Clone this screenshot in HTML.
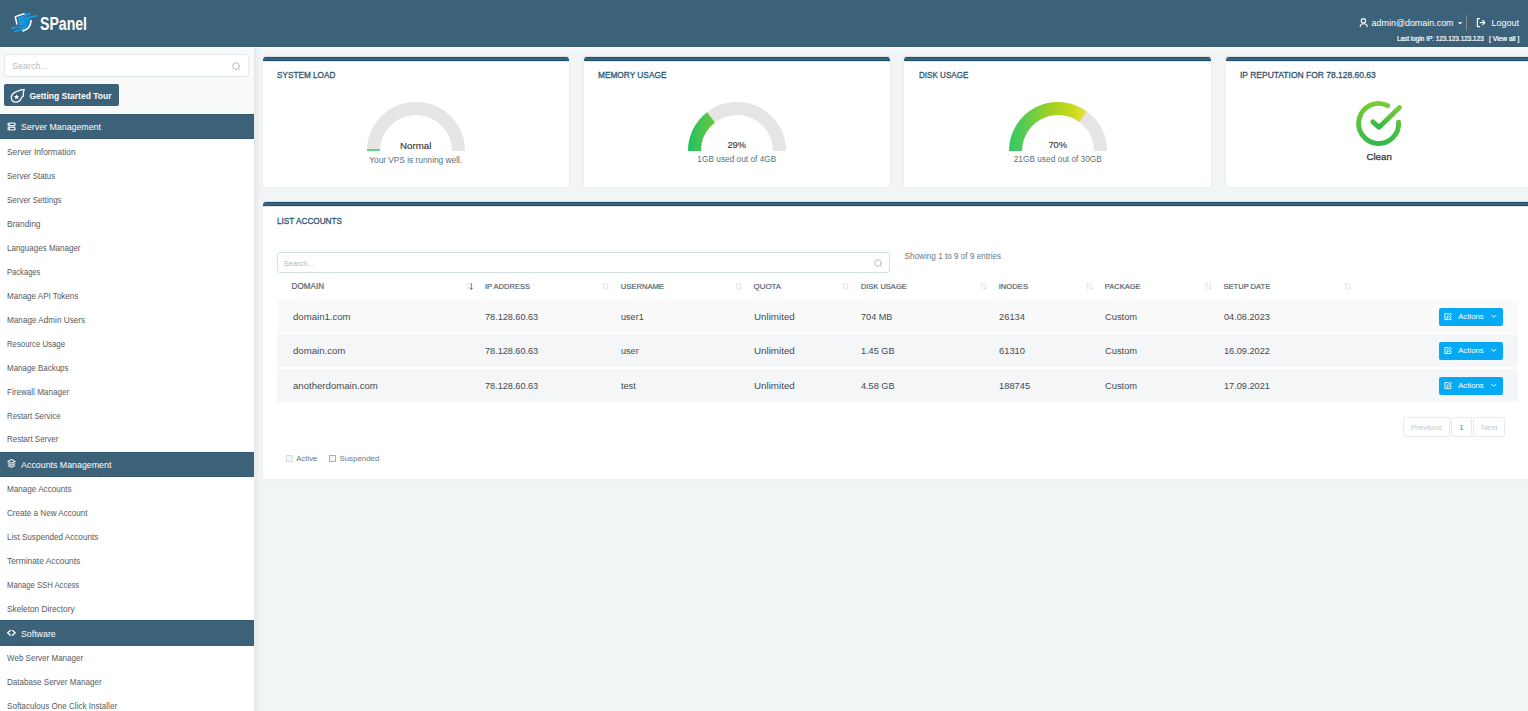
<!DOCTYPE html>
<html><head><meta charset="utf-8"><title>SPanel</title>
<style>
html,body{margin:0;padding:0;}
body{width:1528px;height:711px;overflow:hidden;position:relative;background:#f2f5f6;font-family:'Liberation Sans', sans-serif;}
.t{position:absolute;white-space:nowrap;line-height:1;}
svg{position:absolute;overflow:visible;}
</style></head><body>
<div style="position:absolute;left:0px;top:0px;width:1528px;height:47px;background:#3c627a;"></div>
<div style="position:absolute;left:0px;top:46px;width:1528px;height:1px;background:#385d75;"></div>
<div style="position:absolute;left:0px;top:47px;width:1528px;height:1px;background:#ffffff;"></div>
<div style="position:absolute;left:0px;top:48px;width:254px;height:663px;background:#ffffff;"></div>
<div style="position:absolute;left:0px;top:48px;width:254px;height:66px;background:#f8f9f9;"></div>
<div style="position:absolute;left:254px;top:48px;width:7px;height:663px;background:linear-gradient(90deg,#e6e9eb,#f2f5f6);"></div>
<div style="position:absolute;left:261px;top:48px;width:1267px;height:8px;background:linear-gradient(180deg,#f7f8f9,#f0f3f4);"></div>
<div class="t" style="left:39.60px;top:15.10px;font-size:18.0px;color:#ffffff;font-weight:700;transform:scaleX(0.783);transform-origin:left top;">SPanel</div>
<div class="t" style="left:1371.60px;top:18.70px;font-size:8.94px;color:#ffffff;font-weight:400;">admin@domain.com</div>
<div class="t" style="left:1491.50px;top:18.68px;font-size:8.96px;color:#ffffff;font-weight:400;">Logout</div>
<div class="t" style="left:1397.20px;top:35.59px;font-size:6.6px;color:#ffffff;font-weight:400;transform:scaleX(0.9696969696969698);transform-origin:left top;-webkit-text-stroke:0.2px #ffffff;">Last login IP: 123.123.123.123</div>
<div class="t" style="left:1489.20px;top:35.59px;font-size:6.6px;color:#ffffff;font-weight:400;transform:scaleX(1.0121212121212122);transform-origin:left top;-webkit-text-stroke:0.2px #ffffff;">[ View all ]</div>
<div style="position:absolute;left:4px;top:54px;width:245px;height:23px;box-sizing:border-box;background:#fff;border:1px solid #e3e8ec;border-radius:3px;"></div>
<div class="t" style="left:12.00px;top:61.95px;font-size:9.0px;color:#b8bcc0;font-weight:400;">Search...</div>
<div style="position:absolute;left:4px;top:84px;width:115px;height:22px;background:#3c627a;border-radius:2px;"></div>
<div class="t" style="left:29.40px;top:92.36px;font-size:8.52px;color:#ffffff;font-weight:700;">Getting Started Tour</div>
<div style="position:absolute;left:0px;top:114px;width:254px;height:25px;background:#3c627a;"></div>
<div style="position:absolute;left:0px;top:114px;width:254px;height:1px;background:#345a72;"></div>
<div style="position:absolute;left:0px;top:138px;width:254px;height:1px;background:#365b73;"></div>
<div class="t" style="left:21.00px;top:123.09px;font-size:8.83px;color:#ffffff;font-weight:400;">Server Management</div>
<div class="t" style="left:7.30px;top:148.29px;font-size:8.6px;color:#555b61;font-weight:400;transform:scaleX(0.9709302325581395);transform-origin:left top;">Server Information</div>
<div class="t" style="left:7.30px;top:172.22px;font-size:8.6px;color:#555b61;font-weight:400;transform:scaleX(0.9267441860465117);transform-origin:left top;">Server Status</div>
<div class="t" style="left:7.30px;top:196.15px;font-size:8.6px;color:#555b61;font-weight:400;transform:scaleX(0.9290697674418605);transform-origin:left top;">Server Settings</div>
<div class="t" style="left:7.30px;top:220.08px;font-size:8.6px;color:#555b61;font-weight:400;transform:scaleX(0.9732558139534884);transform-origin:left top;">Branding</div>
<div class="t" style="left:7.30px;top:244.01px;font-size:8.6px;color:#555b61;font-weight:400;transform:scaleX(0.9325581395348838);transform-origin:left top;">Languages Manager</div>
<div class="t" style="left:7.30px;top:267.94px;font-size:8.6px;color:#555b61;font-weight:400;transform:scaleX(0.8848837209302326);transform-origin:left top;">Packages</div>
<div class="t" style="left:7.30px;top:291.87px;font-size:8.6px;color:#555b61;font-weight:400;transform:scaleX(0.9348837209302325);transform-origin:left top;">Manage API Tokens</div>
<div class="t" style="left:7.30px;top:315.80px;font-size:8.6px;color:#555b61;font-weight:400;transform:scaleX(0.9500000000000001);transform-origin:left top;">Manage Admin Users</div>
<div class="t" style="left:7.30px;top:339.73px;font-size:8.6px;color:#555b61;font-weight:400;transform:scaleX(0.9058139534883721);transform-origin:left top;">Resource Usage</div>
<div class="t" style="left:7.30px;top:363.66px;font-size:8.6px;color:#555b61;font-weight:400;transform:scaleX(0.9255813953488372);transform-origin:left top;">Manage Backups</div>
<div class="t" style="left:7.30px;top:387.59px;font-size:8.6px;color:#555b61;font-weight:400;transform:scaleX(0.9418604651162791);transform-origin:left top;">Firewall Manager</div>
<div class="t" style="left:7.30px;top:411.52px;font-size:8.6px;color:#555b61;font-weight:400;transform:scaleX(0.9104651162790698);transform-origin:left top;">Restart Service</div>
<div class="t" style="left:7.30px;top:435.45px;font-size:8.6px;color:#555b61;font-weight:400;transform:scaleX(0.9255813953488372);transform-origin:left top;">Restart Server</div>
<div style="position:absolute;left:0px;top:451.5px;width:254px;height:25px;background:#3c627a;"></div>
<div style="position:absolute;left:0px;top:452px;width:254px;height:1px;background:#345a72;"></div>
<div style="position:absolute;left:0px;top:476px;width:254px;height:1px;background:#365b73;"></div>
<div class="t" style="left:21.10px;top:460.59px;font-size:8.83px;color:#ffffff;font-weight:400;">Accounts Management</div>
<div class="t" style="left:7.10px;top:484.79px;font-size:8.6px;color:#555b61;font-weight:400;transform:scaleX(0.9453488372093024);transform-origin:left top;">Manage Accounts</div>
<div class="t" style="left:7.10px;top:508.75px;font-size:8.6px;color:#555b61;font-weight:400;transform:scaleX(0.9418604651162791);transform-origin:left top;">Create a New Account</div>
<div class="t" style="left:7.10px;top:532.71px;font-size:8.6px;color:#555b61;font-weight:400;transform:scaleX(0.9453488372093024);transform-origin:left top;">List Suspended Accounts</div>
<div class="t" style="left:7.10px;top:556.67px;font-size:8.6px;color:#555b61;font-weight:400;transform:scaleX(0.9767441860465117);transform-origin:left top;">Terminate Accounts</div>
<div class="t" style="left:7.10px;top:580.63px;font-size:8.6px;color:#555b61;font-weight:400;transform:scaleX(0.894186046511628);transform-origin:left top;">Manage SSH Access</div>
<div class="t" style="left:7.10px;top:604.59px;font-size:8.6px;color:#555b61;font-weight:400;transform:scaleX(0.9616279069767442);transform-origin:left top;">Skeleton Directory</div>
<div style="position:absolute;left:0px;top:620.5px;width:254px;height:25px;background:#3c627a;"></div>
<div style="position:absolute;left:0px;top:620px;width:254px;height:1px;background:#345a72;"></div>
<div style="position:absolute;left:0px;top:644px;width:254px;height:1px;background:#365b73;"></div>
<div class="t" style="left:20.90px;top:629.59px;font-size:8.83px;color:#ffffff;font-weight:400;">Software</div>
<div class="t" style="left:7.30px;top:653.89px;font-size:8.6px;color:#555b61;font-weight:400;transform:scaleX(0.9337209302325581);transform-origin:left top;">Web Server Manager</div>
<div class="t" style="left:7.30px;top:677.79px;font-size:8.6px;color:#555b61;font-weight:400;transform:scaleX(0.9383720930232559);transform-origin:left top;">Database Server Manager</div>
<div class="t" style="left:7.30px;top:701.69px;font-size:8.6px;color:#555b61;font-weight:400;transform:scaleX(0.9406976744186046);transform-origin:left top;">Softaculous One Click Installer</div>
<div style="position:absolute;left:262.5px;top:57px;width:306.5px;height:130px;box-sizing:border-box;background:#fff;border-radius:3px;box-shadow:0 0 3px rgba(0,0,0,0.07);"></div>
<div style="position:absolute;left:262.5px;top:56px;width:306.5px;height:1px;background:#dde0e3;border-radius:3px 3px 0 0;"></div>
<div style="position:absolute;left:262.5px;top:57px;width:306.5px;height:4px;background:linear-gradient(180deg,#1b5270 0,#1b5270 1px,#3d6279 1px,#3d6279 3px,#1b5270 3px);border-radius:3px 3px 0 0;"></div>
<div style="position:absolute;left:262.5px;top:61px;width:306.5px;height:1px;background:#e6e9ec;"></div>
<div class="t" style="left:277.00px;top:70.85px;font-size:9.0px;color:#2d5670;font-weight:400;transform:scaleX(0.911111111111111);transform-origin:left top;-webkit-text-stroke:0.3px #2d5670;">SYSTEM LOAD</div>
<div style="position:absolute;left:583.5px;top:57px;width:306.5px;height:130px;box-sizing:border-box;background:#fff;border-radius:3px;box-shadow:0 0 3px rgba(0,0,0,0.07);"></div>
<div style="position:absolute;left:583.5px;top:56px;width:306.5px;height:1px;background:#dde0e3;border-radius:3px 3px 0 0;"></div>
<div style="position:absolute;left:583.5px;top:57px;width:306.5px;height:4px;background:linear-gradient(180deg,#1b5270 0,#1b5270 1px,#3d6279 1px,#3d6279 3px,#1b5270 3px);border-radius:3px 3px 0 0;"></div>
<div style="position:absolute;left:583.5px;top:61px;width:306.5px;height:1px;background:#e6e9ec;"></div>
<div class="t" style="left:598.00px;top:70.85px;font-size:9.0px;color:#2d5670;font-weight:400;transform:scaleX(0.9222222222222223);transform-origin:left top;-webkit-text-stroke:0.3px #2d5670;">MEMORY USAGE</div>
<div style="position:absolute;left:904px;top:57px;width:306.5px;height:130px;box-sizing:border-box;background:#fff;border-radius:3px;box-shadow:0 0 3px rgba(0,0,0,0.07);"></div>
<div style="position:absolute;left:904px;top:56px;width:306.5px;height:1px;background:#dde0e3;border-radius:3px 3px 0 0;"></div>
<div style="position:absolute;left:904px;top:57px;width:306.5px;height:4px;background:linear-gradient(180deg,#1b5270 0,#1b5270 1px,#3d6279 1px,#3d6279 3px,#1b5270 3px);border-radius:3px 3px 0 0;"></div>
<div style="position:absolute;left:904px;top:61px;width:306.5px;height:1px;background:#e6e9ec;"></div>
<div class="t" style="left:918.50px;top:70.85px;font-size:9.0px;color:#2d5670;font-weight:400;transform:scaleX(0.8966666666666667);transform-origin:left top;-webkit-text-stroke:0.3px #2d5670;">DISK USAGE</div>
<div style="position:absolute;left:1225.5px;top:57px;width:306.5px;height:130px;box-sizing:border-box;background:#fff;border-radius:3px;box-shadow:0 0 3px rgba(0,0,0,0.07);"></div>
<div style="position:absolute;left:1225.5px;top:56px;width:306.5px;height:1px;background:#dde0e3;border-radius:3px 3px 0 0;"></div>
<div style="position:absolute;left:1225.5px;top:57px;width:306.5px;height:4px;background:linear-gradient(180deg,#1b5270 0,#1b5270 1px,#3d6279 1px,#3d6279 3px,#1b5270 3px);border-radius:3px 3px 0 0;"></div>
<div style="position:absolute;left:1225.5px;top:61px;width:306.5px;height:1px;background:#e6e9ec;"></div>
<div class="t" style="left:1240.00px;top:70.85px;font-size:9.0px;color:#2d5670;font-weight:400;transform:scaleX(0.9422222222222223);transform-origin:left top;-webkit-text-stroke:0.3px #2d5670;">IP REPUTATION FOR 78.128.60.63</div>
<div style="position:absolute;left:262.5px;top:202px;width:1275px;height:277px;box-sizing:border-box;background:#fff;border-radius:3px;box-shadow:0 0 3px rgba(0,0,0,0.07);"></div>
<div style="position:absolute;left:262.5px;top:201px;width:1275px;height:1px;background:#dde0e3;border-radius:3px 3px 0 0;"></div>
<div style="position:absolute;left:262.5px;top:202px;width:1275px;height:4px;background:linear-gradient(180deg,#1b5270 0,#1b5270 1px,#3d6279 1px,#3d6279 3px,#1b5270 3px);border-radius:3px 3px 0 0;"></div>
<div style="position:absolute;left:262.5px;top:206px;width:1275px;height:1px;background:#e6e9ec;"></div>
<div class="t" style="left:276.80px;top:216.55px;font-size:9.0px;color:#2d5670;font-weight:400;transform:scaleX(0.911111111111111);transform-origin:left top;-webkit-text-stroke:0.3px #2d5670;">LIST ACCOUNTS</div>
<svg style="left:366.70px;top:101.80px" width="98" height="49" viewBox="0 0 98 49"><defs><linearGradient id="g1" gradientUnits="userSpaceOnUse" x1="0" y1="0" x2="13.00" y2="0"><stop offset="0" stop-color="#3ec66a"/><stop offset="1" stop-color="#3ec66a"/></linearGradient></defs><path d="M6.50 49.00 A42.5 42.5 0 0 1 91.50 49.00" fill="none" stroke="#e5e5e5" stroke-width="13"/><path d="M6.50 49.00 A42.5 42.5 0 0 1 6.50 48.47" fill="none" stroke="url(#g1)" stroke-width="13"/></svg>
<div class="t" style="left:-84.30px;width:1000px;text-align:center;top:140.95px;font-size:9.71px;color:#333333;font-weight:400;-webkit-text-stroke:0.12px #333333;">Normal</div>
<div class="t" style="left:-84.30px;width:1000px;text-align:center;top:155.94px;font-size:8.3px;color:#5b6f80;font-weight:400;">Your VPS is running well.</div>
<svg style="left:687.80px;top:101.80px" width="98" height="49" viewBox="0 0 98 49"><defs><linearGradient id="g2" gradientUnits="userSpaceOnUse" x1="0" y1="0" x2="29.56" y2="0"><stop offset="0" stop-color="#22c163"/><stop offset="1" stop-color="#72c93a"/></linearGradient></defs><path d="M6.50 49.00 A42.5 42.5 0 0 1 91.50 49.00" fill="none" stroke="#e5e5e5" stroke-width="13"/><path d="M6.50 49.00 A42.5 42.5 0 0 1 23.06 15.34" fill="none" stroke="url(#g2)" stroke-width="13"/></svg>
<div class="t" style="left:236.80px;width:1000px;text-align:center;top:139.61px;font-size:9.4px;color:#333333;font-weight:400;-webkit-text-stroke:0.12px #333333;">29%</div>
<div class="t" style="left:236.80px;width:1000px;text-align:center;top:154.54px;font-size:8.3px;color:#5b6f80;font-weight:400;">1GB used out of 4GB</div>
<svg style="left:1008.80px;top:101.80px" width="98" height="49" viewBox="0 0 98 49"><defs><linearGradient id="g3" gradientUnits="userSpaceOnUse" x1="0" y1="0" x2="80.48" y2="0"><stop offset="0" stop-color="#2ec96b"/><stop offset="0.5" stop-color="#9dd023"/><stop offset="0.78" stop-color="#c8d81e"/><stop offset="1" stop-color="#f2e43e"/></linearGradient></defs><path d="M6.50 49.00 A42.5 42.5 0 0 1 91.50 49.00" fill="none" stroke="#e5e5e5" stroke-width="13"/><path d="M6.50 49.00 A42.5 42.5 0 0 1 73.98 14.62" fill="none" stroke="url(#g3)" stroke-width="13"/></svg>
<div class="t" style="left:557.80px;width:1000px;text-align:center;top:139.61px;font-size:9.4px;color:#333333;font-weight:400;-webkit-text-stroke:0.12px #333333;">70%</div>
<div class="t" style="left:557.80px;width:1000px;text-align:center;top:154.54px;font-size:8.3px;color:#5b6f80;font-weight:400;">21GB used out of 30GB</div>
<svg style="left:1350px;top:95px" width="60" height="60" viewBox="1350 95 60 60"><defs><linearGradient id="gc" x1="0" y1="0" x2="0" y2="1"><stop offset="0" stop-color="#7acb34"/><stop offset="1" stop-color="#36b94a"/></linearGradient></defs><g fill="none" stroke="url(#gc)" stroke-width="4.9" stroke-linecap="round" stroke-linejoin="round"><path d="M1387.73 105.68 A20 20 0 1 0 1398.61 122.28"/><path d="M1372.8 121.8 L1379.1 127.3 L1399.5 107.5"/></g></svg>
<div class="t" style="left:879.10px;width:1000px;text-align:center;top:151.94px;font-size:9.72px;color:#333333;font-weight:400;-webkit-text-stroke:0.25px #333333;">Clean</div>
<div style="position:absolute;left:277px;top:252px;width:612.5px;height:20.5px;box-sizing:border-box;border:1px solid #d3e0e5;border-radius:3px;background:#fff;"></div>
<div class="t" style="left:283.40px;top:259.90px;font-size:7.65px;color:#b4b9be;font-weight:400;">Search...</div>
<div class="t" style="left:904.60px;top:253.46px;font-size:8.17px;color:#6b7782;font-weight:400;">Showing 1 to 9 of 9 entries</div>
<div class="t" style="left:291.60px;top:282.87px;font-size:8.15px;color:#58656f;font-weight:400;-webkit-text-stroke:0.2px #58656f;">DOMAIN</div>
<svg style="left:464.2px;top:280px" width="12" height="12" viewBox="464.2 280 12 12"><g fill="none" stroke-width="0.9" stroke-linecap="round" stroke-linejoin="round"><path d="M468.0 283.4 L468.0 289.4 M466.7 284.8 L468.0 283.4 L469.3 284.8" stroke="#dde1e5"/><path d="M471.5 283.4 L471.5 289.4 M470.2 288.0 L471.5 289.4 L472.8 288.0" stroke="#5b6b78"/></g></svg>
<div class="t" style="left:484.90px;top:283.39px;font-size:7.54px;color:#58656f;font-weight:400;-webkit-text-stroke:0.2px #58656f;">IP ADDRESS</div>
<svg style="left:600.2px;top:280px" width="12" height="12" viewBox="600.2 280 12 12"><g fill="none" stroke-width="0.9" stroke-linecap="round" stroke-linejoin="round"><path d="M604.0 283.4 L604.0 289.4 M602.7 284.8 L604.0 283.4 L605.3 284.8" stroke="#dde1e5"/><path d="M607.5 283.4 L607.5 289.4 M606.2 288.0 L607.5 289.4 L608.8 288.0" stroke="#dde1e5"/></g></svg>
<div class="t" style="left:620.80px;top:283.32px;font-size:7.62px;color:#58656f;font-weight:400;-webkit-text-stroke:0.2px #58656f;">USERNAME</div>
<svg style="left:733px;top:280px" width="12" height="12" viewBox="733 280 12 12"><g fill="none" stroke-width="0.9" stroke-linecap="round" stroke-linejoin="round"><path d="M736.8 283.4 L736.8 289.4 M735.5 284.8 L736.8 283.4 L738.0999999999999 284.8" stroke="#dde1e5"/><path d="M740.3 283.4 L740.3 289.4 M739.0 288.0 L740.3 289.4 L741.5999999999999 288.0" stroke="#dde1e5"/></g></svg>
<div class="t" style="left:753.50px;top:283.06px;font-size:7.93px;color:#58656f;font-weight:400;-webkit-text-stroke:0.2px #58656f;">QUOTA</div>
<svg style="left:840.2px;top:280px" width="12" height="12" viewBox="840.2 280 12 12"><g fill="none" stroke-width="0.9" stroke-linecap="round" stroke-linejoin="round"><path d="M844.0 283.4 L844.0 289.4 M842.7 284.8 L844.0 283.4 L845.3 284.8" stroke="#dde1e5"/><path d="M847.5 283.4 L847.5 289.4 M846.2 288.0 L847.5 289.4 L848.8 288.0" stroke="#dde1e5"/></g></svg>
<div class="t" style="left:860.80px;top:283.40px;font-size:7.53px;color:#58656f;font-weight:400;-webkit-text-stroke:0.2px #58656f;">DISK USAGE</div>
<svg style="left:977.8px;top:280px" width="12" height="12" viewBox="977.8 280 12 12"><g fill="none" stroke-width="0.9" stroke-linecap="round" stroke-linejoin="round"><path d="M981.5999999999999 283.4 L981.5999999999999 289.4 M980.3 284.8 L981.5999999999999 283.4 L982.8999999999999 284.8" stroke="#dde1e5"/><path d="M985.0999999999999 283.4 L985.0999999999999 289.4 M983.8 288.0 L985.0999999999999 289.4 L986.3999999999999 288.0" stroke="#dde1e5"/></g></svg>
<div class="t" style="left:998.70px;top:283.28px;font-size:7.67px;color:#58656f;font-weight:400;-webkit-text-stroke:0.2px #58656f;">INODES</div>
<svg style="left:1084.4px;top:280px" width="12" height="12" viewBox="1084.4 280 12 12"><g fill="none" stroke-width="0.9" stroke-linecap="round" stroke-linejoin="round"><path d="M1088.2 283.4 L1088.2 289.4 M1086.9 284.8 L1088.2 283.4 L1089.5 284.8" stroke="#dde1e5"/><path d="M1091.7 283.4 L1091.7 289.4 M1090.4 288.0 L1091.7 289.4 L1093.0 288.0" stroke="#dde1e5"/></g></svg>
<div class="t" style="left:1104.80px;top:283.43px;font-size:7.5px;color:#58656f;font-weight:400;-webkit-text-stroke:0.2px #58656f;">PACKAGE</div>
<svg style="left:1202.6px;top:280px" width="12" height="12" viewBox="1202.6 280 12 12"><g fill="none" stroke-width="0.9" stroke-linecap="round" stroke-linejoin="round"><path d="M1206.3999999999999 283.4 L1206.3999999999999 289.4 M1205.1 284.8 L1206.3999999999999 283.4 L1207.6999999999998 284.8" stroke="#dde1e5"/><path d="M1209.8999999999999 283.4 L1209.8999999999999 289.4 M1208.6 288.0 L1209.8999999999999 289.4 L1211.1999999999998 288.0" stroke="#dde1e5"/></g></svg>
<div class="t" style="left:1223.50px;top:283.38px;font-size:7.55px;color:#58656f;font-weight:400;-webkit-text-stroke:0.2px #58656f;">SETUP DATE</div>
<svg style="left:1341.6px;top:280px" width="12" height="12" viewBox="1341.6 280 12 12"><g fill="none" stroke-width="0.9" stroke-linecap="round" stroke-linejoin="round"><path d="M1345.3999999999999 283.4 L1345.3999999999999 289.4 M1344.1 284.8 L1345.3999999999999 283.4 L1346.6999999999998 284.8" stroke="#dde1e5"/><path d="M1348.8999999999999 283.4 L1348.8999999999999 289.4 M1347.6 288.0 L1348.8999999999999 289.4 L1350.1999999999998 288.0" stroke="#dde1e5"/></g></svg>
<div style="position:absolute;left:277px;top:300px;width:1241px;height:33px;background:#fafafa;"></div>
<div class="t" style="left:293.30px;top:311.96px;font-size:9.7px;color:#444a50;font-weight:400;transform:scaleX(0.9907216494845361);transform-origin:left top;">domain1.com</div>
<div class="t" style="left:485.20px;top:311.96px;font-size:9.7px;color:#444a50;font-weight:400;transform:scaleX(0.9391752577319588);transform-origin:left top;">78.128.60.63</div>
<div class="t" style="left:621.10px;top:311.96px;font-size:9.7px;color:#444a50;font-weight:400;transform:scaleX(0.9391752577319588);transform-origin:left top;">user1</div>
<div class="t" style="left:753.50px;top:311.96px;font-size:9.7px;color:#444a50;font-weight:400;transform:scaleX(1.0092783505154639);transform-origin:left top;">Unlimited</div>
<div class="t" style="left:861.00px;top:311.96px;font-size:9.7px;color:#444a50;font-weight:400;transform:scaleX(0.9422680412371135);transform-origin:left top;">704 MB</div>
<div class="t" style="left:998.60px;top:311.96px;font-size:9.7px;color:#444a50;font-weight:400;transform:scaleX(0.9639175257731959);transform-origin:left top;">26134</div>
<div class="t" style="left:1105.20px;top:311.96px;font-size:9.7px;color:#444a50;font-weight:400;transform:scaleX(0.9608247422680414);transform-origin:left top;">Custom</div>
<div class="t" style="left:1223.50px;top:311.96px;font-size:9.7px;color:#444a50;font-weight:400;transform:scaleX(0.9474226804123711);transform-origin:left top;">04.08.2023</div>
<div style="position:absolute;left:1438.6px;top:307.5px;width:64.5px;height:18.2px;background:#05a9f4;border-radius:2px;"></div>
<div class="t" style="left:1458.20px;top:312.69px;font-size:7.78px;color:#ffffff;font-weight:400;">Actions</div>
<div style="position:absolute;left:277px;top:334px;width:1241px;height:33px;background:#f5f6f8;"></div>
<div class="t" style="left:293.30px;top:345.96px;font-size:9.7px;color:#444a50;font-weight:400;transform:scaleX(0.9907216494845361);transform-origin:left top;">domain.com</div>
<div class="t" style="left:485.20px;top:345.96px;font-size:9.7px;color:#444a50;font-weight:400;transform:scaleX(0.9391752577319588);transform-origin:left top;">78.128.60.63</div>
<div class="t" style="left:621.10px;top:345.96px;font-size:9.7px;color:#444a50;font-weight:400;transform:scaleX(0.9391752577319588);transform-origin:left top;">user</div>
<div class="t" style="left:753.50px;top:345.96px;font-size:9.7px;color:#444a50;font-weight:400;transform:scaleX(1.0092783505154639);transform-origin:left top;">Unlimited</div>
<div class="t" style="left:861.00px;top:345.96px;font-size:9.7px;color:#444a50;font-weight:400;transform:scaleX(0.9422680412371135);transform-origin:left top;">1.45 GB</div>
<div class="t" style="left:998.60px;top:345.96px;font-size:9.7px;color:#444a50;font-weight:400;transform:scaleX(0.9639175257731959);transform-origin:left top;">61310</div>
<div class="t" style="left:1105.20px;top:345.96px;font-size:9.7px;color:#444a50;font-weight:400;transform:scaleX(0.9608247422680414);transform-origin:left top;">Custom</div>
<div class="t" style="left:1223.50px;top:345.96px;font-size:9.7px;color:#444a50;font-weight:400;transform:scaleX(0.9474226804123711);transform-origin:left top;">16.09.2022</div>
<div style="position:absolute;left:1438.6px;top:341.5px;width:64.5px;height:18.2px;background:#05a9f4;border-radius:2px;"></div>
<div class="t" style="left:1458.20px;top:346.69px;font-size:7.78px;color:#ffffff;font-weight:400;">Actions</div>
<div style="position:absolute;left:277px;top:369px;width:1241px;height:33px;background:#f5f6f8;"></div>
<div class="t" style="left:293.30px;top:380.96px;font-size:9.7px;color:#444a50;font-weight:400;transform:scaleX(0.9907216494845361);transform-origin:left top;">anotherdomain.com</div>
<div class="t" style="left:485.20px;top:380.96px;font-size:9.7px;color:#444a50;font-weight:400;transform:scaleX(0.9391752577319588);transform-origin:left top;">78.128.60.63</div>
<div class="t" style="left:621.10px;top:380.96px;font-size:9.7px;color:#444a50;font-weight:400;transform:scaleX(0.9391752577319588);transform-origin:left top;">test</div>
<div class="t" style="left:753.50px;top:380.96px;font-size:9.7px;color:#444a50;font-weight:400;transform:scaleX(1.0092783505154639);transform-origin:left top;">Unlimited</div>
<div class="t" style="left:861.00px;top:380.96px;font-size:9.7px;color:#444a50;font-weight:400;transform:scaleX(0.9422680412371135);transform-origin:left top;">4.58 GB</div>
<div class="t" style="left:998.60px;top:380.96px;font-size:9.7px;color:#444a50;font-weight:400;transform:scaleX(0.9639175257731959);transform-origin:left top;">188745</div>
<div class="t" style="left:1105.20px;top:380.96px;font-size:9.7px;color:#444a50;font-weight:400;transform:scaleX(0.9608247422680414);transform-origin:left top;">Custom</div>
<div class="t" style="left:1223.50px;top:380.96px;font-size:9.7px;color:#444a50;font-weight:400;transform:scaleX(0.9474226804123711);transform-origin:left top;">17.09.2021</div>
<div style="position:absolute;left:1438.6px;top:376.5px;width:64.5px;height:18.2px;background:#05a9f4;border-radius:2px;"></div>
<div class="t" style="left:1458.20px;top:381.69px;font-size:7.78px;color:#ffffff;font-weight:400;">Actions</div>
<div style="position:absolute;left:1403px;top:417px;width:47px;height:20.3px;box-sizing:border-box;border:1px solid #e8ebee;border-radius:2px;"></div>
<div style="position:absolute;left:1451.2px;top:417px;width:20.5px;height:20.3px;box-sizing:border-box;border:1px solid #e8ebee;border-radius:2px;"></div>
<div style="position:absolute;left:1473.1px;top:417px;width:32.3px;height:20.3px;box-sizing:border-box;border:1px solid #e8ebee;border-radius:2px;"></div>
<div class="t" style="left:926.50px;width:1000px;text-align:center;top:424.10px;font-size:8.0px;color:#c3c8cf;font-weight:400;">Previous</div>
<div class="t" style="left:961.40px;width:1000px;text-align:center;top:424.10px;font-size:8.0px;color:#3f7fd6;font-weight:400;">1</div>
<div class="t" style="left:989.20px;width:1000px;text-align:center;top:424.10px;font-size:8.0px;color:#c3c8cf;font-weight:400;">Next</div>
<div style="position:absolute;left:286px;top:455px;width:7px;height:7px;box-sizing:border-box;border:1px solid #d8dde2;background:#f3f5f8;"></div>
<div class="t" style="left:296.20px;top:455.39px;font-size:7.78px;color:#6b7782;font-weight:400;">Active</div>
<div style="position:absolute;left:329px;top:455px;width:7px;height:7px;box-sizing:border-box;border:1px solid #f5a04a;background:#f3f5f8;"></div>
<div class="t" style="left:339.40px;top:455.27px;font-size:7.92px;color:#6b7782;font-weight:400;">Suspended</div>
<svg style="left:0;top:0" width="60" height="46" viewBox="0 0 60 46"><defs><linearGradient id="lg" x1="0" y1="0" x2="1" y2="0"><stop offset="0" stop-color="#1aa0ea"/><stop offset="1" stop-color="#0a82d2"/></linearGradient></defs><path d="M17.9 17.6 L24.5 15.6 L30.0 14.2 L30.5 19.5 Q30.3 26.6 25.2 29.8 L20.8 29.0 L19.2 24.6 Z" fill="url(#lg)"/><g stroke="#139be6" stroke-width="1.9" stroke-linecap="round" fill="none"><path d="M24.6 15.2 L30.0 13.6"/><path d="M25.2 18.3 L36.2 15.9"/><path d="M12.0 28.3 L21.5 26.3"/><path d="M14.9 31.3 L25.5 28.5"/></g><g stroke="#3c627a" stroke-width="0.8" fill="none"><path d="M24.0 17.0 L30.6 15.6"/><path d="M16.5 27.4 L23.5 25.8"/></g><g stroke="#ffffff" stroke-width="1.5" stroke-linecap="round" stroke-linejoin="round" fill="none"><path d="M24.1 13.8 L15.3 16.6 L16.9 24.0"/><path d="M31.1 20.6 Q30.6 28.6 23.0 31.0"/></g></svg>
<svg style="left:1350px;top:10px" width="30" height="24" viewBox="1350 10 30 24"><g stroke="#ffffff" stroke-width="1.1" fill="none" stroke-linecap="round"><circle cx="1363.4" cy="20.8" r="2.2"/><path d="M1360.2 26.8 Q1360.2 23.8 1363.6 23.8 Q1367.2 23.8 1367.2 26.8"/></g></svg>
<svg style="left:1450px;top:10px" width="45" height="24" viewBox="1450 10 45 24"><path d="M1457.7 22.3 L1462.6 22.3 L1460.15 24.3 Z" fill="#ffffff"/><rect x="1466" y="15" width="1" height="15.5" fill="#8c8a82"/><g stroke="#ffffff" stroke-width="1.15" fill="none" stroke-linecap="round" stroke-linejoin="round"><path d="M1479.6 18.6 L1477.4 18.6 L1477.4 26.6 L1479.6 26.6"/><path d="M1480.2 22.6 L1484.6 22.6"/><path d="M1482.8 20.5 L1484.8 22.6 L1482.8 24.7"/></g></svg>
<svg style="left:227.5px;top:57.5px" width="16" height="16" viewBox="227.5 57.5 16 16"><g stroke="#b9bec6" stroke-width="1" fill="none" stroke-linecap="round"><circle cx="235.5" cy="65.5" r="3.3"/><path d="M237.9 67.9 L239.5 69.5"/></g></svg>
<svg style="left:869.7px;top:254.60000000000002px" width="16" height="16" viewBox="869.7 254.60000000000002 16 16"><g stroke="#b9bec6" stroke-width="1" fill="none" stroke-linecap="round"><circle cx="877.7" cy="262.6" r="3.3"/><path d="M880.1 265.0 L881.7 266.6"/></g></svg>
<svg style="left:6px;top:84px" width="24" height="22" viewBox="6 84 24 22"><g stroke="#ffffff" stroke-width="1.25" fill="none" stroke-linejoin="round" stroke-linecap="round"><path d="M24.2 89.3 L22.2 90.0 L21.0 89.7 L19.4 90.7 L17.6 91.0 L14.4 92.6 Q11.2 94.8 11.3 97.6 Q11.6 102.0 16.0 102.2 Q18.6 102.2 20.3 100.0 L22.0 97.0 L23.4 95.9 L23.2 93.4 Z"/></g><path d="M16.60 94.25 L17.33 95.99 L19.22 96.15 L17.79 97.39 L18.22 99.22 L16.60 98.25 L14.98 99.22 L15.41 97.39 L13.98 96.15 L15.87 95.99 Z" fill="#ffffff"/></svg>
<svg style="left:4px;top:118px" width="16" height="16" viewBox="4 118 16 16"><rect x="7.5" y="122.4" width="8.1" height="3.95" rx="1.4" fill="#d9e0e6"/><rect x="7.5" y="126.6" width="8.1" height="3.95" rx="1.4" fill="#d9e0e6"/><rect x="10.0" y="123.8" width="4.0" height="1.2" rx="0.5" fill="#2f566e"/><rect x="10.0" y="128.0" width="4.0" height="1.2" rx="0.5" fill="#2f566e"/></svg>
<svg style="left:4px;top:455px" width="16" height="16" viewBox="4 455 16 16"><g stroke="#e6ebef" stroke-width="1.1" fill="none" stroke-linejoin="round"><path d="M11.5 459.6 L15.2 461.4 L11.5 463.2 L7.8 461.4 Z"/><path d="M7.8 463.4 L11.5 465.2 L15.2 463.4"/><path d="M7.8 465.4 L11.5 467.2 L15.2 465.4"/></g></svg>
<svg style="left:4px;top:625px" width="16" height="16" viewBox="4 625 16 16"><g stroke="#ffffff" stroke-width="1.3" fill="none" stroke-linecap="round" stroke-linejoin="round"><path d="M10.4 630.4 L7.6 632.8 L10.4 635.2"/><path d="M12.4 630.4 L15.2 632.8 L12.4 635.2"/></g></svg>
<svg style="left:1440px;top:307.5px" width="62" height="18" viewBox="1440 0 62 18"><g stroke="#ffffff" stroke-width="0.9" fill="none" stroke-linecap="round" stroke-linejoin="round"><path d="M1448.0 5.6 L1444.9 5.6 L1444.9 11.6 L1450.8 11.6 L1450.8 8.8"/><path d="M1447.0 9.9 L1447.3 8.2 L1450.3 5.1 L1451.6 6.4 L1448.6 9.5 Z"/><path d="M1491.6 7.4 L1493.8 9.1 L1496.0 7.4"/></g></svg>
<svg style="left:1440px;top:341.5px" width="62" height="18" viewBox="1440 0 62 18"><g stroke="#ffffff" stroke-width="0.9" fill="none" stroke-linecap="round" stroke-linejoin="round"><path d="M1448.0 5.6 L1444.9 5.6 L1444.9 11.6 L1450.8 11.6 L1450.8 8.8"/><path d="M1447.0 9.9 L1447.3 8.2 L1450.3 5.1 L1451.6 6.4 L1448.6 9.5 Z"/><path d="M1491.6 7.4 L1493.8 9.1 L1496.0 7.4"/></g></svg>
<svg style="left:1440px;top:376.5px" width="62" height="18" viewBox="1440 0 62 18"><g stroke="#ffffff" stroke-width="0.9" fill="none" stroke-linecap="round" stroke-linejoin="round"><path d="M1448.0 5.6 L1444.9 5.6 L1444.9 11.6 L1450.8 11.6 L1450.8 8.8"/><path d="M1447.0 9.9 L1447.3 8.2 L1450.3 5.1 L1451.6 6.4 L1448.6 9.5 Z"/><path d="M1491.6 7.4 L1493.8 9.1 L1496.0 7.4"/></g></svg>
<div style="position:absolute;left:367px;top:149px;width:13px;height:2px;background:#5fd48a;"></div>
</body></html>
